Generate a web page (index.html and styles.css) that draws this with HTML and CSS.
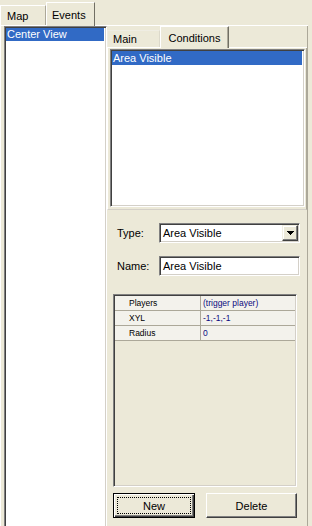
FILE: index.html
```html
<!DOCTYPE html>
<html lang="en">
<head>
    <meta charset="UTF-8">
    <title>Events</title>
    <link rel="stylesheet" href="styles.css">
</head>
<body>
    <div class="tabs top">
        <div class="tab map">Map</div>
        <div class="tab active events">Events</div>
    </div>

    <div class="page">
        <div class="list sunken side">
            <div class="item selected">Center View</div>
        </div>

        <div class="main">
            <div class="tabs sub">
                <div class="tab main-tab">Main</div>
                <div class="tab active cond-tab">Conditions</div>
            </div>

            <div class="subpage">
                <div class="list sunken conds">
                    <div class="item selected">Area Visible</div>
                </div>
            </div>

            <div class="field">
                <span class="label">Type:</span>
                <div class="combo sunken">
                    <span class="value">Area Visible</span>
                    <span class="drop">
                        <svg width="7" height="4" viewBox="0 0 7 4" shape-rendering="crispEdges">
                            <path d="M0 0h7v1H0z M1 1h5v1H1z M2 2h3v1H2z M3 3h1v1H3z" fill="#000"/>
                        </svg>
                    </span>
                </div>
            </div>

            <div class="field">
                <span class="label">Name:</span>
                <div class="edit sunken">Area Visible</div>
            </div>

            <div class="grid sunken">
                <table>
                    <tr><td class="name">Players</td><td class="val">(trigger player)</td></tr>
                    <tr><td class="name">XYL</td><td class="val">-1,-1,-1</td></tr>
                    <tr><td class="name">Radius</td><td class="val">0</td></tr>
                </table>
            </div>

            <div class="buttons">
                <button class="btn default">New</button>
                <button class="btn delete">Delete</button>
            </div>
        </div>
    </div>
</body>
</html>
```

FILE: styles.css
```css
body {
    margin: 0;
    width: 312px;
    height: 526px;
    overflow: hidden;
    background-color: #ece9d8;
    color: #000;
    font-family: "Liberation Sans", Arial, sans-serif;
    font-size: 11px;
}

/* tab strips */
.tabs {
    display: flex;
    align-items: flex-end;
    box-sizing: border-box;
    border-bottom: 1px solid #fff;
}
.tabs.top {
    width: 308px;
    height: 26px;
}
.tab {
    box-sizing: border-box;
    display: flex;
    align-items: center;
    border: 1px solid;
    border-bottom: none;
    border-color: #fff #aca899 transparent #fff;
    background-color: #ece9d8;
}
.tab.active {
    margin-bottom: -1px;
    border-right-color: #716f64;
}
.map {
    width: 46px;
    height: 20px;
    padding-left: 6px;
}
.events {
    width: 49px;
    height: 24px;
    padding-left: 5px;
}

/* outer page */
.page {
    display: flex;
    box-sizing: border-box;
    width: 308px;
    height: 500px;
    border-left: 1px solid #fff;
    border-right: 1px solid #aca899;
}

.sunken {
    box-sizing: border-box;
    border: 1px solid;
    border-color: #808080 #fff #fff #808080;
    padding: 1px;
    box-shadow: inset 1px 1px #404040, inset -1px -1px #d4d0c8;
}

.list {
    background-color: #fff;
}
.item {
    height: 13px;
    line-height: 13px;
    padding-left: 1px;
    white-space: nowrap;
}
.item.selected {
    background-color: #316ac5;
    color: #fff;
}
.side {
    flex: none;
    width: 103px;
    height: 510px;
    margin-left: 3px;
}
.side .item {
    margin-right: 1px;
}

.main {
    flex: 1;
    display: flex;
    flex-direction: column;
}

/* inner tabs */
.tabs.sub {
    height: 22px;
}
.main-tab {
    width: 53px;
    height: 17px;
    padding-left: 5px;
    border-color: #efede3 #dcd9cb transparent #efede3;
}
.cond-tab {
    width: 69px;
    height: 22px;
    justify-content: center;
    border-color: #fff #716f64 transparent #fff;
    box-shadow: inset -1px 0 #aca899;
}

.subpage {
    box-sizing: border-box;
    height: 162px;
    padding: 1px 1px 2px 2px;
    border-left: 1px solid #fff;
    border-right: 1px solid #aca899;
    border-bottom: 1px solid #d4d0c8;
}
.conds {
    width: 195px;
    height: 158px;
}
.conds .item {
    height: 14px;
    line-height: 14px;
    margin-right: 1px;
}

/* fields */
.field {
    display: flex;
    align-items: center;
    margin-top: 13px;
    padding-left: 10px;
}
.label {
    width: 42px;
}
.combo, .edit {
    width: 141px;
    height: 20px;
    background-color: #fff;
}
.combo {
    display: flex;
    align-items: center;
}
.combo .value {
    flex: 1;
    padding-left: 2px;
}
.drop {
    box-sizing: border-box;
    width: 16px;
    height: 16px;
    display: flex;
    align-items: center;
    justify-content: center;
    background-color: #ece9d8;
    border: 1px solid;
    border-color: #f1efe2 #404040 #404040 #f1efe2;
    box-shadow: inset -1px -1px #808080, inset 1px 1px #fff;
}
.drop svg {
    display: block;
    margin-left: 1px;
}
.edit {
    line-height: 16px;
    padding-left: 3px;
}

/* property grid */
.grid {
    width: 184px;
    height: 193px;
    margin-top: 18px;
    margin-left: 6px;
    padding: 1px 1px 0 1px;
    background-color: #ece9d8;
}
.grid table {
    width: 100%;
    border-collapse: collapse;
    font-size: 8.5px;
}
.grid td {
    height: 14px;
    padding: 0;
    border-bottom: 1px solid #aca899;
    background-color: #f3f2ec;
    white-space: nowrap;
}
.grid td.name {
    width: 71px;
    padding-left: 14px;
    border-right: 1px solid #aca899;
}
.grid td.val {
    padding-left: 2px;
    color: #0a0a80;
}

/* buttons */
.buttons {
    display: flex;
    gap: 11px;
    margin-top: 6px;
    margin-left: 6px;
}
.btn {
    box-sizing: border-box;
    height: 25px;
    padding: 0;
    font-family: inherit;
    font-size: 11px;
    color: #000;
    background-color: #ece9d8;
    border: 1px solid;
    border-color: #fff #404040 #404040 #fff;
    box-shadow: inset -1px -1px #808080;
}
.btn.default {
    width: 82px;
    border-color: #000;
    box-shadow: inset 1px 1px #fff, inset -1px -1px #404040, inset -2px -2px #808080;
    outline: 1px dotted #000;
    outline-offset: -5px;
}
.btn.delete {
    width: 91px;
}
```
